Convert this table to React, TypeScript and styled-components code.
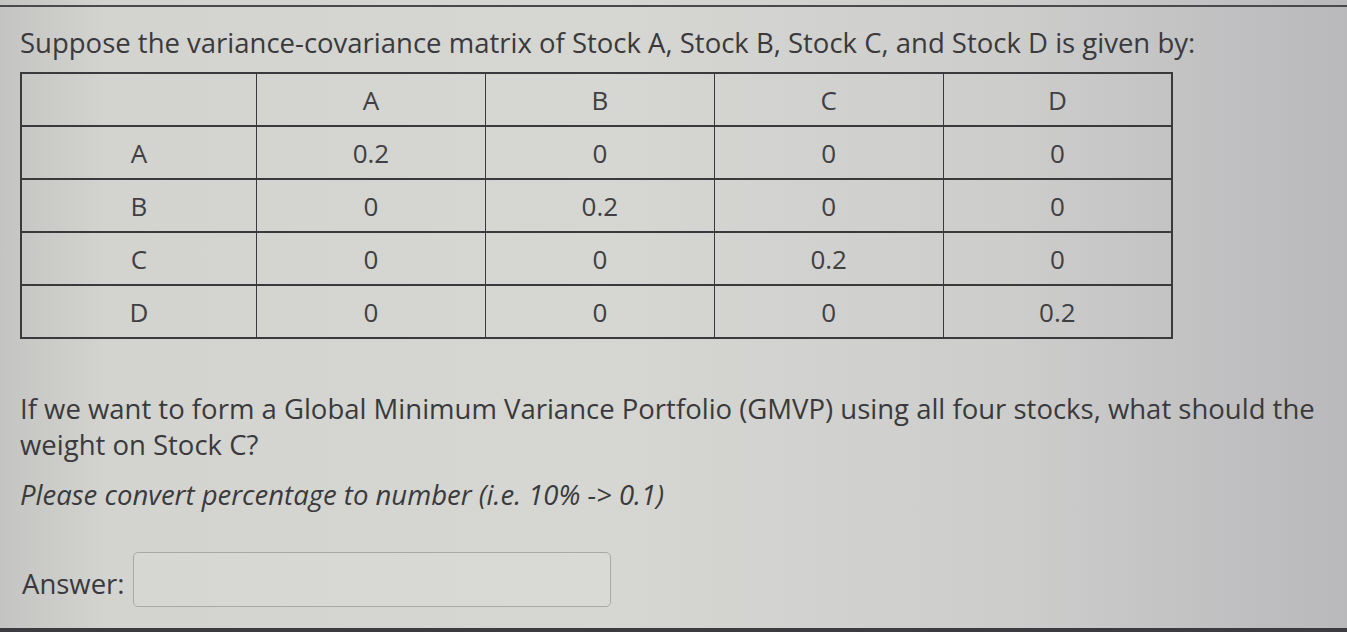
import React from "react";
import styled, { createGlobalStyle } from "styled-components";

const GlobalStyle = createGlobalStyle`
  html, body {
    margin: 0;
    padding: 0;
  }
  body {
    width: 1347px;
    height: 632px;
    overflow: hidden;
    font-family: "Open Sans", "Noto Sans", sans-serif;
    color: #3a3a3c;
    background: linear-gradient(
      90deg,
      #c4c4c2 0%,
      #d3d3d0 8%,
      #d6d6d3 45%,
      #cdcdcc 75%,
      #b9b9bc 100%
    );
  }
`;

const Screen = styled.div`
  height: 627px;
  box-sizing: border-box;
  border-top: 2px solid #4a4a4c;
  border-bottom: 4px solid #3c3c40;
  margin-top: 5px;
  padding: 17px 0 0 20px;
  display: flex;
  flex-direction: column;
`;

const Title = styled.h1`
  margin: 0;
  font-size: 27.5px;
  font-weight: 400;
  line-height: 38px;
`;

const Matrix = styled.table`
  margin-top: 10px;
  width: 1153px;
  border-collapse: collapse;
  border: 2px solid #3a3a3c;
  table-layout: fixed;
`;

const Cell = styled.td<{ $wide?: boolean }>`
  ${(p) => (p.$wide ? "width: 234px;" : "")}
  height: 51px;
  padding: 0;
  border: 2px solid #3a3a3c;
  border-left-width: 1.5px;
  border-right-width: 1.5px;
  text-align: center;
  font-size: 26px;
  color: #404042;
`;

const Question = styled.p`
  margin: 52px 0 0 0;
  max-width: 1300px;
  font-size: 27.5px;
  line-height: 36px;
`;

const Hint = styled.p`
  margin: 13px 0 0 0;
  font-size: 27.5px;
  font-style: italic;
  line-height: 37px;
`;

const AnswerRow = styled.div`
  margin-top: 39px;
  display: flex;
  align-items: center;
  gap: 8px;
  padding-left: 2px;
`;

const AnswerLabel = styled.label`
  font-size: 27.5px;
  margin-top: 8px;
`;

const AnswerInput = styled.input`
  width: 478px;
  height: 55px;
  box-sizing: border-box;
  border: 1.5px solid #a9a9a9;
  border-radius: 5px;
  background: rgba(255, 255, 255, 0.08);
  outline: none;
  font-family: inherit;
  font-size: 24px;
`;

const names = ["A", "B", "C", "D"];
const cov = [
  [0.2, 0, 0, 0],
  [0, 0.2, 0, 0],
  [0, 0, 0.2, 0],
  [0, 0, 0, 0.2],
];

export default function App() {
  return (
    <>
      <GlobalStyle />
      <Screen>
        <Title>
          Suppose the variance-covariance matrix of Stock A, Stock B, Stock C,
          and Stock D is given by:
        </Title>
        <Matrix>
          <tbody>
            <tr>
              <Cell $wide />
              {names.map((n) => (
                <Cell key={n}>{n}</Cell>
              ))}
            </tr>
            {cov.map((row, i) => (
              <tr key={names[i]}>
                <Cell $wide>{names[i]}</Cell>
                {row.map((v, j) => (
                  <Cell key={j}>{v}</Cell>
                ))}
              </tr>
            ))}
          </tbody>
        </Matrix>
        <Question>
          If we want to form a Global Minimum Variance Portfolio (GMVP) using
          all four stocks, what should the weight on Stock C?
        </Question>
        <Hint>Please convert percentage to number (i.e. 10% -&gt; 0.1)</Hint>
        <AnswerRow>
          <AnswerLabel htmlFor="answer">Answer:</AnswerLabel>
          <AnswerInput id="answer" type="text" />
        </AnswerRow>
      </Screen>
    </>
  );
}
